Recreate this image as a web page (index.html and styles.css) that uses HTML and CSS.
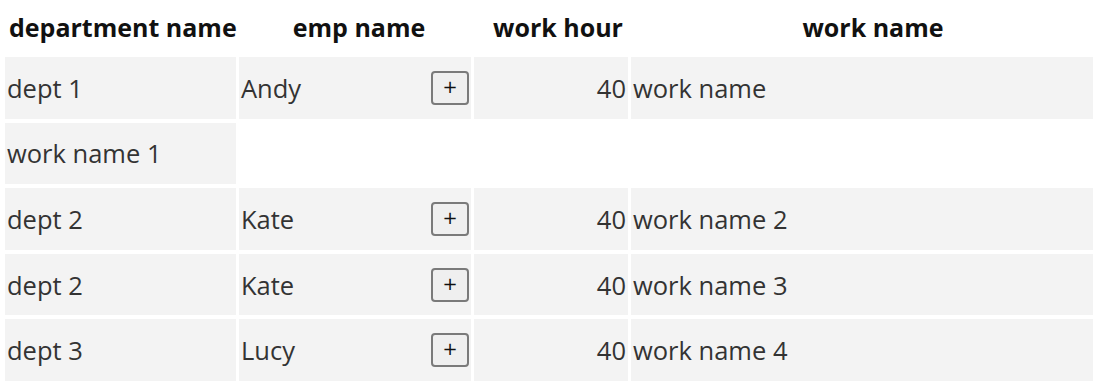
FILE: index.html
```html
<!DOCTYPE html>
<html>
<head>
<meta charset="utf-8">
<link rel="stylesheet" href="styles.css">
</head>
<body>
<table class="grid">
  <colgroup>
    <col class="c-dept">
    <col class="c-emp">
    <col class="c-hour">
    <col class="c-work">
  </colgroup>
  <thead>
    <tr class="head">
      <th class="hcell h1">department name</th>
      <th class="hcell h2">emp name</th>
      <th class="hcell h3">work hour</th>
      <th class="hcell h4">work name</th>
    </tr>
  </thead>
  <tbody>
    <tr class="row">
      <td class="cell">dept 1</td>
      <td class="cell"><div class="emp"><span>Andy</span><button class="add">+</button></div></td>
      <td class="cell num">40</td>
      <td class="cell">work name</td>
    </tr>
    <tr class="row">
      <td class="cell">work name 1</td>
      <td class="empty"></td>
      <td class="empty"></td>
      <td class="empty"></td>
    </tr>
    <tr class="row">
      <td class="cell">dept 2</td>
      <td class="cell"><div class="emp"><span>Kate</span><button class="add">+</button></div></td>
      <td class="cell num">40</td>
      <td class="cell">work name 2</td>
    </tr>
    <tr class="row">
      <td class="cell">dept 2</td>
      <td class="cell"><div class="emp"><span>Kate</span><button class="add">+</button></div></td>
      <td class="cell num">40</td>
      <td class="cell">work name 3</td>
    </tr>
    <tr class="row">
      <td class="cell">dept 3</td>
      <td class="cell"><div class="emp"><span>Lucy</span><button class="add">+</button></div></td>
      <td class="cell num">40</td>
      <td class="cell">work name 4</td>
    </tr>
  </tbody>
</table>
</body>
</html>
```

FILE: styles.css
```css
html, body {
  margin: 0;
  padding: 0;
  background: #ffffff;
}
body {
  padding: 0 2px;
  font-family: "Open Sans", "Noto Sans", sans-serif;
  color: #333333;
}
.grid {
  border-collapse: separate;
  border-spacing: 3px 4px;
  table-layout: fixed;
  width: 1094px;
  margin-top: -4px;
}
.c-dept { width: 231px; }
.c-emp { width: 232px; }
.c-hour { width: 154px; }
.c-work { width: 462px; }
.hcell {
  height: 53px;
  padding: 0;
  font-size: 25px;
  font-weight: 700;
  color: #111111;
  text-align: center;
  vertical-align: middle;
  white-space: nowrap;
}
.h1 { padding-left: 4px; }
.h2 { padding-left: 8px; }
.h3 { padding-left: 14px; }
.h4 { padding-left: 22px; }
.row { height: 61.6px; }
.cell {
  background: #f3f3f3;
  padding: 0 2px;
  font-size: 25.5px;
  vertical-align: middle;
  white-space: nowrap;
}
.empty {
  padding: 0;
}
.num {
  text-align: right;
}
.emp {
  display: flex;
  align-items: center;
  justify-content: space-between;
}
.add {
  width: 38px;
  height: 34px;
  padding: 0 0 2px 0;
  border: 2px solid #7a7a7a;
  border-radius: 4px;
  background: #efefef;
  color: #111111;
  font-family: "DejaVu Sans", sans-serif;
  font-size: 18px;
  line-height: 1;
}
```
